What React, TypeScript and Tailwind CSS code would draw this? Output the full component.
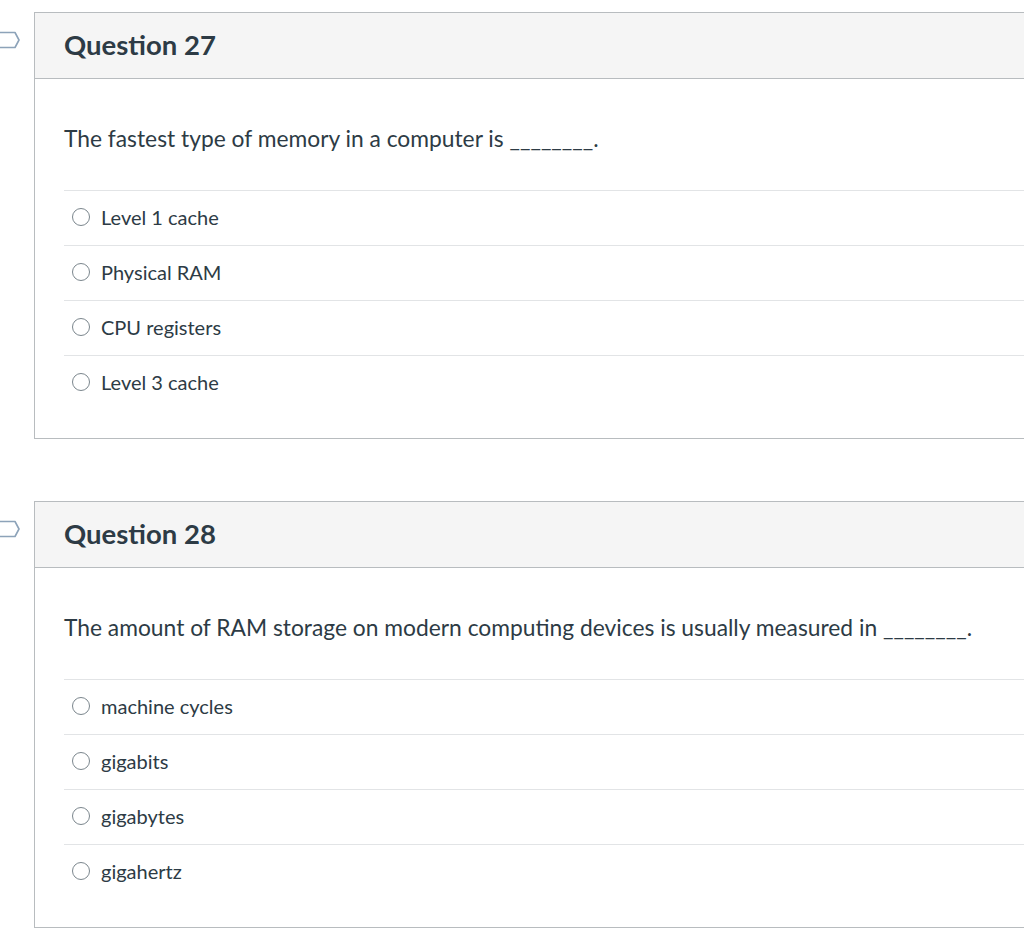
import React from 'react';

type Question = {
    number: number;
    text: string;
    answers: string[];
};

const questions: Question[] = [
    {
        number: 27,
        text: 'The fastest type of memory in a computer is ________.',
        answers: ['Level 1 cache', 'Physical RAM', 'CPU registers', 'Level 3 cache'],
    },
    {
        number: 28,
        text: 'The amount of RAM storage on modern computing devices is usually measured in ________.',
        answers: ['machine cycles', 'gigabits', 'gigabytes', 'gigahertz'],
    },
];

function FlagIcon() {
    return (
        <svg width="24" height="18" viewBox="0 0 24 18" fill="none" className="absolute left-[-37px] top-[18px]">
            <path d="M1 1.5 H17 L21 9 L17 16.5 H1" stroke="#8da3b9" strokeWidth="1.6" strokeLinejoin="round" />
        </svg>
    );
}

function QuestionCard({ q }: { q: Question }) {
    return (
        <div className="relative w-[1010px] border border-[#b8bcbf] bg-white">
            <FlagIcon />
            {/* Header */}
            <div className="flex h-[66px] items-center border-b border-[#b8bcbf] bg-[#f5f5f5] px-[29px] pb-[2px]">
                <h2 className="text-[27.5px] font-bold text-[#2d3b45]">Question {q.number}</h2>
            </div>

            {/* Body */}
            <div className="pl-[29px] pt-[44px] pb-[28px]">
                <p className="pb-[37px] text-[22.8px] leading-[30px] text-[#2d3b45]">{q.text}</p>
                {q.answers.map((a) => (
                    <div key={a} className="flex h-[55px] items-center border-t border-[#e2e4e6] pl-[8px] pb-[2px]">
                        <span className="h-[18px] w-[18px] rounded-full border border-[#7b868d] bg-white" />
                        <span className="ml-[11px] text-[20px] text-[#2d3b45]">{a}</span>
                    </div>
                ))}
            </div>
        </div>
    );
}

export default function App() {
    return (
        <div
            className="min-h-[948px] w-[1024px] overflow-hidden bg-white pl-[34px] pt-[12px]"
            style={{ fontFamily: 'Lato, "Noto Sans", sans-serif' }}
        >
            <div className="flex flex-col gap-[62px]">
                {questions.map((q) => (
                    <QuestionCard key={q.number} q={q} />
                ))}
            </div>
        </div>
    );
}
